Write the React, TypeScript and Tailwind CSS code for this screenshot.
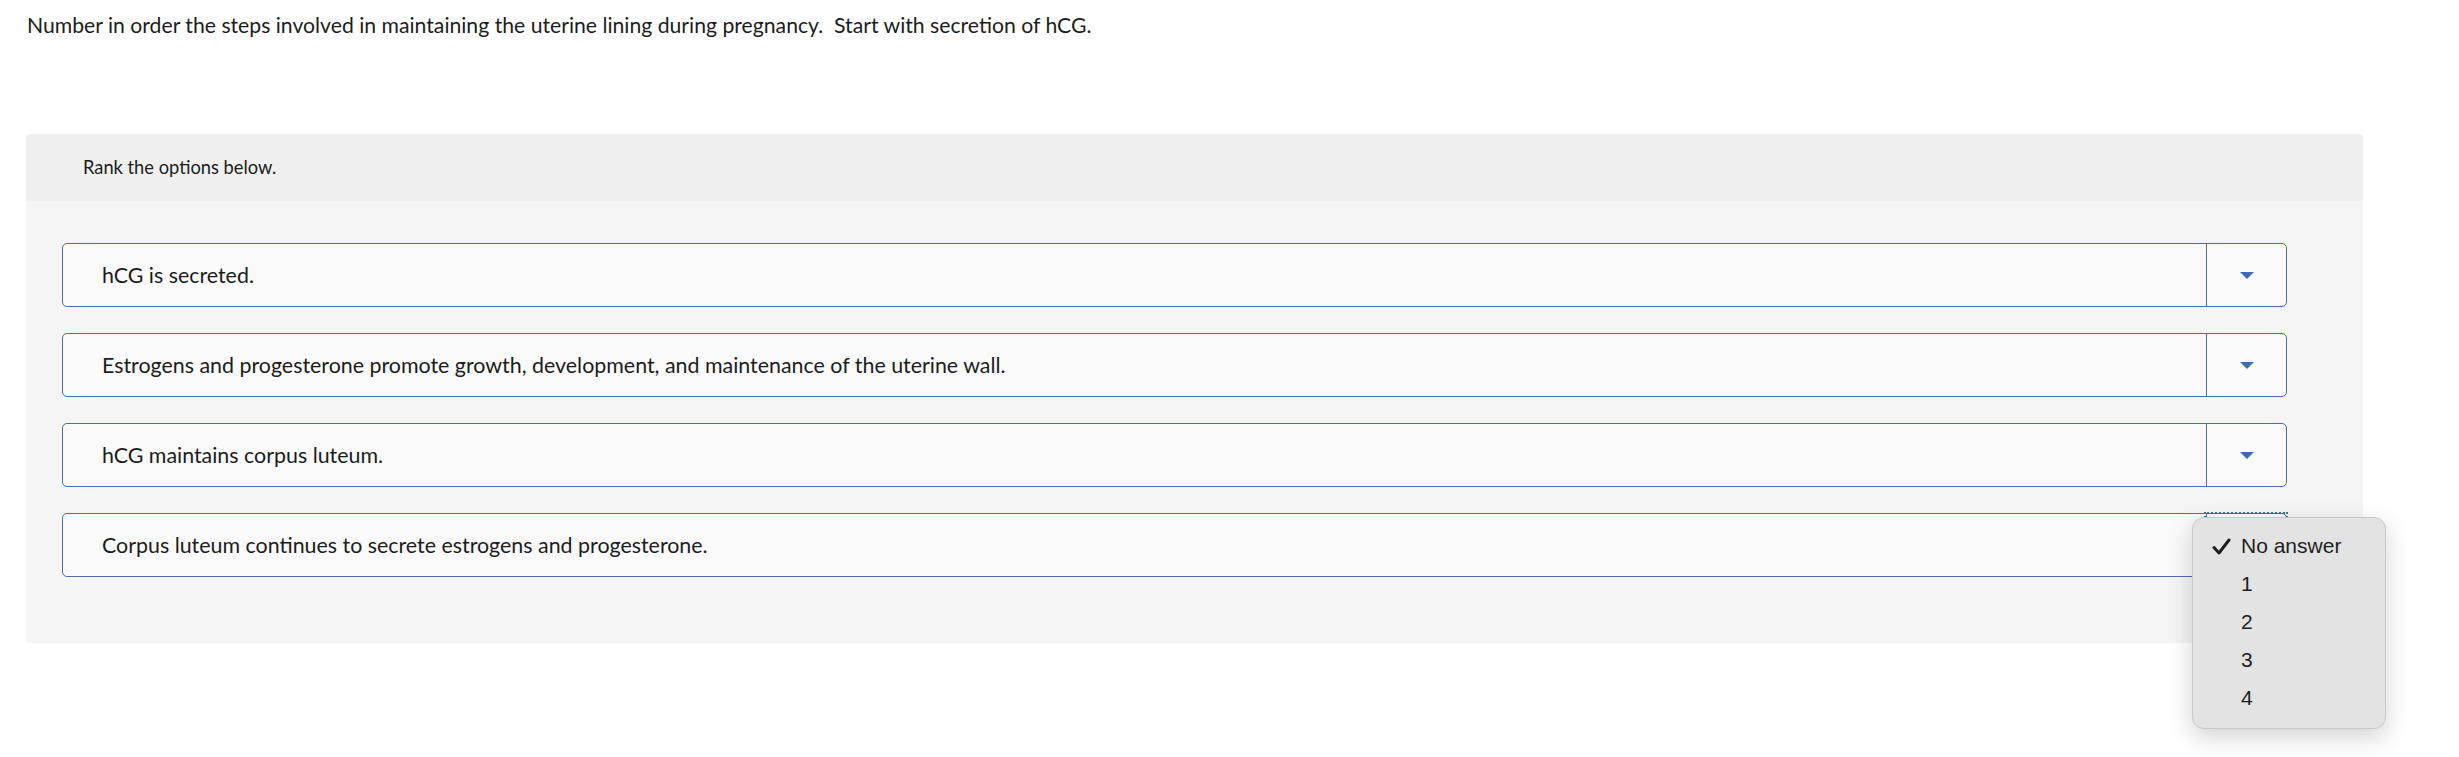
import React from 'react';

const options = [
  'hCG is secreted.',
  'Estrogens and progesterone promote growth, development, and maintenance of the uterine wall.',
  'hCG maintains corpus luteum.',
  'Corpus luteum continues to secrete estrogens and progesterone.',
];

const menuItems = ['No answer', '1', '2', '3', '4'];

function Caret() {
  return (
    <svg width="14" height="7" viewBox="0 0 14 7" className="block">
      <path d="M0 0 H14 L7 7 Z" fill="#3d6bb3" />
    </svg>
  );
}

function RankRow({ text, focused }: { text: string; focused?: boolean }) {
  return (
    <div className="flex h-[64px] items-stretch rounded-[5px] border border-[#4a6ea6] bg-[#fafafa]">
      <div className="flex flex-1 items-center pl-[39px] text-[21.4px] text-[#1c1c1c]">{text}</div>
      <div
        className={
          focused
            ? 'flex w-[80px] items-center justify-center border-l border-[#4a6ea6] outline-2 outline-dotted outline-[#3d6bb3]'
            : 'flex w-[80px] items-center justify-center border-l border-[#4a6ea6]'
        }
      >
        <Caret />
      </div>
    </div>
  );
}

export default function App() {
  return (
    <div className="relative min-h-[757px] bg-white font-['Lato',sans-serif] text-[#1c1c1c]">
      <div className="pl-[27px] pt-[10px] text-[21.2px] leading-[30px]">
        Number in order the steps involved in maintaining the uterine lining during pregnancy.&nbsp; Start with
        secretion of hCG.
      </div>

      <div className="ml-[26px] mt-[94px] w-[2337px] overflow-hidden rounded-[4px]">
        <div className="flex h-[67px] items-center bg-[#f0f0f0] pl-[57px] text-[18.3px]">Rank the options below.</div>
        <div className="flex flex-col gap-[26px] bg-[#f5f5f5] pb-[66px] pl-[36px] pr-[76px] pt-[42px]">
          {options.map((o, i) => (
            <RankRow key={i} text={o} focused={i === 3} />
          ))}
        </div>
      </div>

      {/* native select popup */}
      <div className="absolute left-[2192px] top-[517px] w-[194px] rounded-[12px] border border-[#c8c8c8] bg-[#e4e3e4] pb-[11px] pt-[9px] font-['Liberation_Sans',sans-serif] text-[21px] text-[#1e1e1e] shadow-[0_8px_24px_rgba(0,0,0,0.18)]">
        {menuItems.map((m, i) => (
          <div key={m} className="flex h-[38px] items-center">
            <div className="flex w-[48px] justify-end pr-[10px]">
              {i === 0 && (
                <svg width="19" height="17" viewBox="0 0 19 17">
                  <path d="M2 9.5 L7 15 L17 2" fill="none" stroke="#1e1e1e" strokeWidth="3" strokeLinecap="round" strokeLinejoin="round" />
                </svg>
              )}
            </div>
            <span>{m}</span>
          </div>
        ))}
      </div>
    </div>
  );
}
